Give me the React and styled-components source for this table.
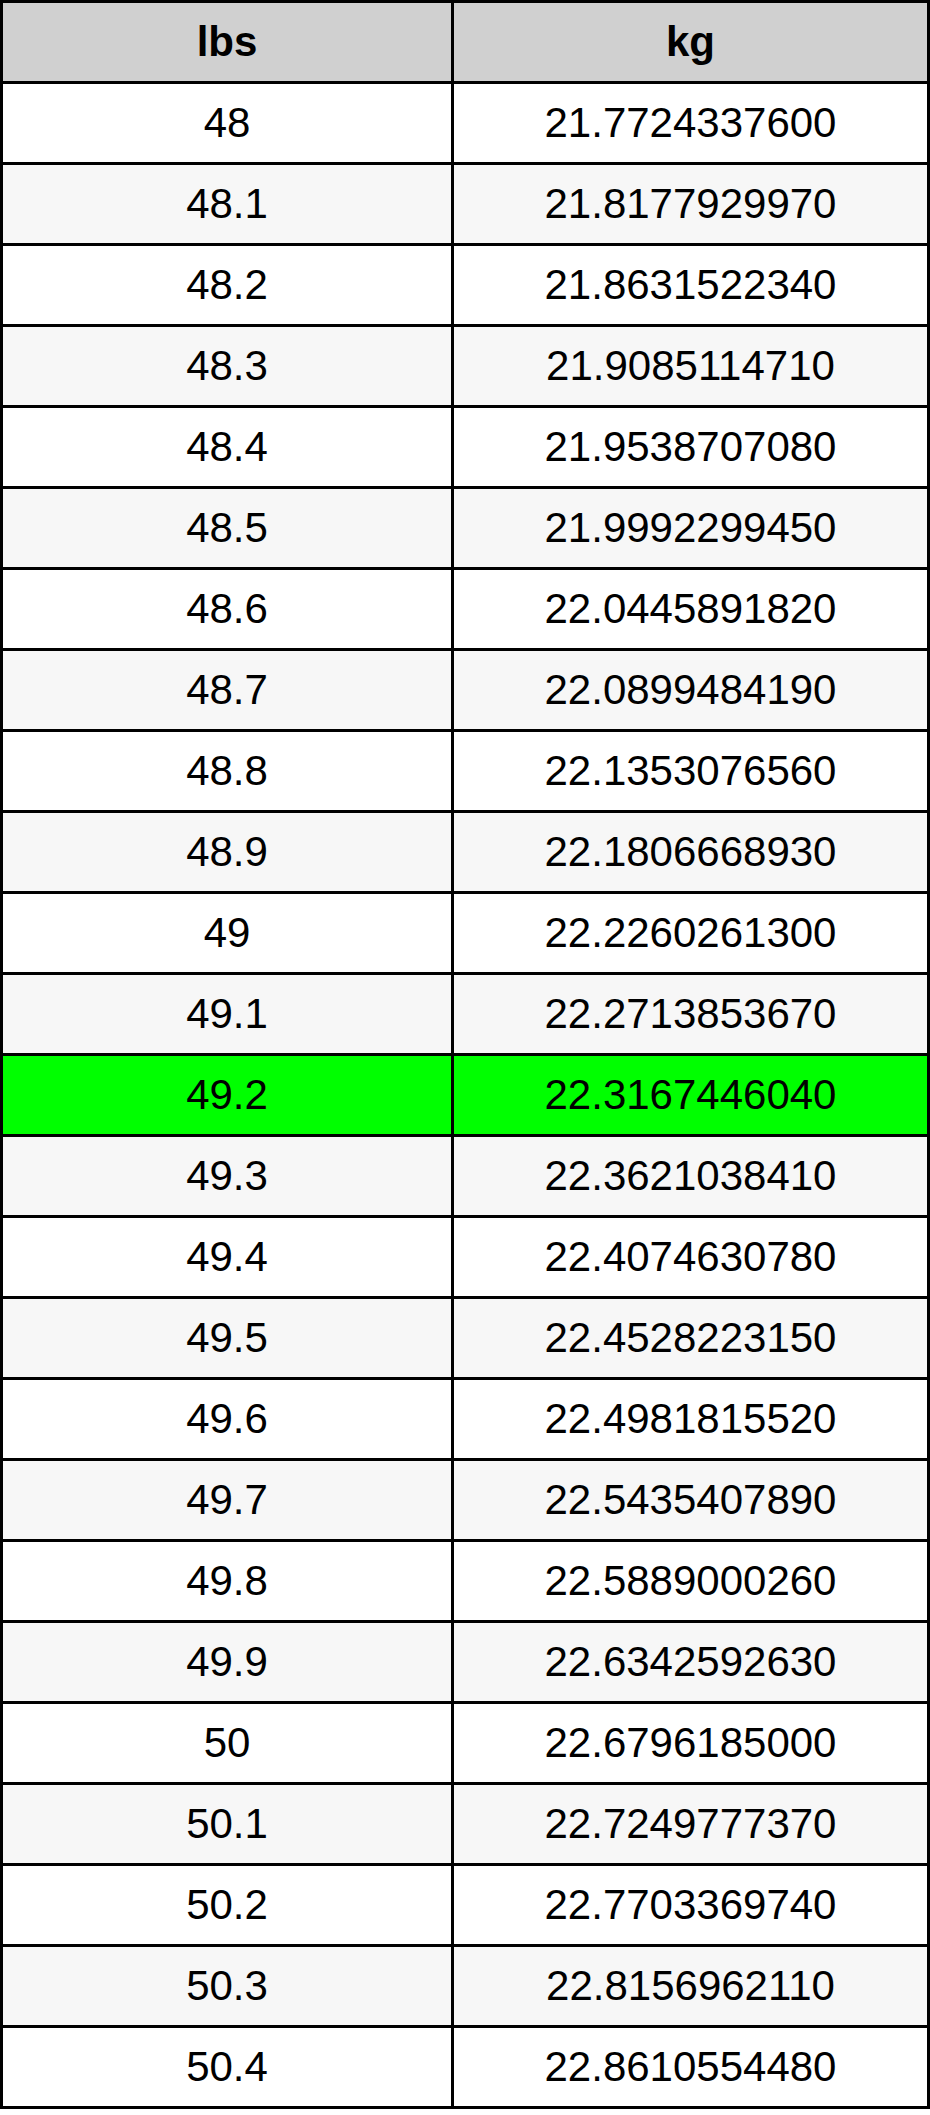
import React from "react";
import styled, { createGlobalStyle } from "styled-components";

const rows = [
  ["48", "21.7724337600"],
  ["48.1", "21.8177929970"],
  ["48.2", "21.8631522340"],
  ["48.3", "21.9085114710"],
  ["48.4", "21.9538707080"],
  ["48.5", "21.9992299450"],
  ["48.6", "22.0445891820"],
  ["48.7", "22.0899484190"],
  ["48.8", "22.1353076560"],
  ["48.9", "22.1806668930"],
  ["49", "22.2260261300"],
  ["49.1", "22.2713853670"],
  ["49.2", "22.3167446040"],
  ["49.3", "22.3621038410"],
  ["49.4", "22.4074630780"],
  ["49.5", "22.4528223150"],
  ["49.6", "22.4981815520"],
  ["49.7", "22.5435407890"],
  ["49.8", "22.5889000260"],
  ["49.9", "22.6342592630"],
  ["50", "22.6796185000"],
  ["50.1", "22.7249777370"],
  ["50.2", "22.7703369740"],
  ["50.3", "22.8156962110"],
  ["50.4", "22.8610554480"],
];

const HIGHLIGHT = "49.2";

export default function App() {
  return (
    <>
      <GlobalStyle />
      <Table>
        <colgroup>
          <col style={{ width: "451px" }} />
          <col style={{ width: "476px" }} />
        </colgroup>
        <thead>
          <tr>
            <HeadCell>lbs</HeadCell>
            <HeadCell>kg</HeadCell>
          </tr>
        </thead>
        <tbody>
          {rows.map(([lbs, kg], i) => (
            <Row key={lbs} $alt={i % 2 === 1} $active={lbs === HIGHLIGHT}>
              <Cell>{lbs}</Cell>
              <Cell>{kg}</Cell>
            </Row>
          ))}
        </tbody>
      </Table>
    </>
  );
}

const GlobalStyle = createGlobalStyle`
  body {
    margin: 0;
    background: #ffffff;
    font-family: "Liberation Sans", Arial, sans-serif;
  }
`;

const Table = styled.table`
  width: 930px;
  table-layout: fixed;
  border-collapse: separate;
  border-spacing: 0;
  border-top: 3px solid #000;
  border-left: 3px solid #000;
  color: #000;
  font-size: 42px;
`;

const HeadCell = styled.th`
  height: 78px;
  padding: 0;
  background: #d0d0d0;
  border-right: 3px solid #000;
  border-bottom: 3px solid #000;
  font-weight: bold;
  text-align: center;
  vertical-align: middle;
`;

const Row = styled.tr`
  background: ${(p) => (p.$active ? "#00ff00" : p.$alt ? "#f7f7f7" : "#ffffff")};
`;

const Cell = styled.td`
  height: 78px;
  padding: 0;
  border-right: 3px solid #000;
  border-bottom: 3px solid #000;
  text-align: center;
  vertical-align: middle;
`;
